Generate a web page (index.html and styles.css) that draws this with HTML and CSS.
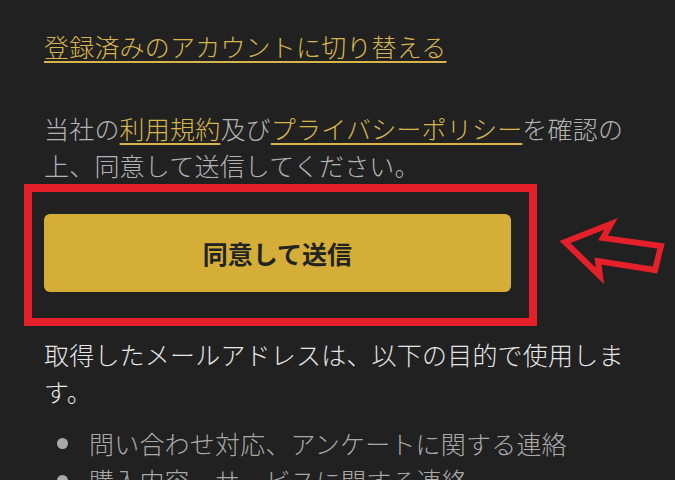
FILE: index.html
```html
<!DOCTYPE html>
<html lang="ja">
  <head>
    <meta charset="UTF-8" />
    <meta name="viewport" content="width=device-width, initial-scale=1.0" />
    <title>同意して送信</title>
    <link rel="stylesheet" href="styles.css">
  </head>
  <body>
    <div class="container">
      <p class="switch"><a href="#">登録済みのアカウントに切り替える</a></p>

      <p class="terms">当社の<a href="#">利用規約</a>及び<a href="#">プライバシーポリシー</a>を確認の上、同意して送信してください。</p>

      <div class="annot">
        <div class="highlight">
          <button class="submit">同意して送信</button>
        </div>
        <svg class="arrow" viewBox="550 210 125 80" width="125" height="80">
          <polygon points="565,242 611,224 603,238 661,246 655,270 598,261 600,276" />
        </svg>
      </div>

      <p class="purpose">取得したメールアドレスは、以下の目的で使用します。</p>

      <ul class="uses">
        <li>問い合わせ対応、アンケートに関する連絡</li>
        <li>購入内容、サービスに関する連絡</li>
      </ul>
    </div>
  </body>
</html>
```

FILE: styles.css
```css
body {
  margin: 0;
  padding: 0;
  background-color: #212121;
  font-family: "Noto Sans CJK JP", "Noto Sans", sans-serif;
  overflow: hidden;
}

.container {
  width: 595px;
  padding: 28px 0 0 44px;
  font-size: 25px;
  font-weight: 300;
  line-height: 37px;
  letter-spacing: 0.2px;
}

p {
  margin: 0;
}

a {
  color: #d8b54b;
  text-decoration: underline;
  text-decoration-thickness: 2px;
  text-underline-offset: 4px;
}

.terms {
  margin-top: 45px;
  color: #b3b3b3;
}

.annot {
  position: relative;
}

.highlight {
  box-sizing: border-box;
  width: 513px;
  margin-left: -20px;
  border: 8px solid #e5202a;
  padding: 22px 18px 26px 12px;
}

.submit {
  display: block;
  width: 467px;
  height: 78px;
  border: none;
  border-radius: 6px;
  background-color: #d5ae37;
  color: #222222;
  font-family: "Noto Sans CJK JP", "Noto Sans", sans-serif;
  font-size: 25px;
  font-weight: 700;
  cursor: pointer;
}

.arrow {
  position: absolute;
  left: 506px;
  top: 26px;
}

.arrow polygon {
  fill: none;
  stroke: #e5202a;
  stroke-width: 6;
  stroke-linejoin: miter;
}

.purpose {
  margin-top: 10px;
  color: #e6e6e6;
}

.uses {
  list-style: none;
  margin: 15px 0 0 0;
  padding: 0;
  color: #a9a9a9;
}

.uses li {
  position: relative;
  padding-left: 45px;
}

.uses li::before {
  content: "";
  position: absolute;
  left: 13px;
  top: 13px;
  width: 11px;
  height: 11px;
  border-radius: 50%;
  background-color: #a9a9a9;
}
```
